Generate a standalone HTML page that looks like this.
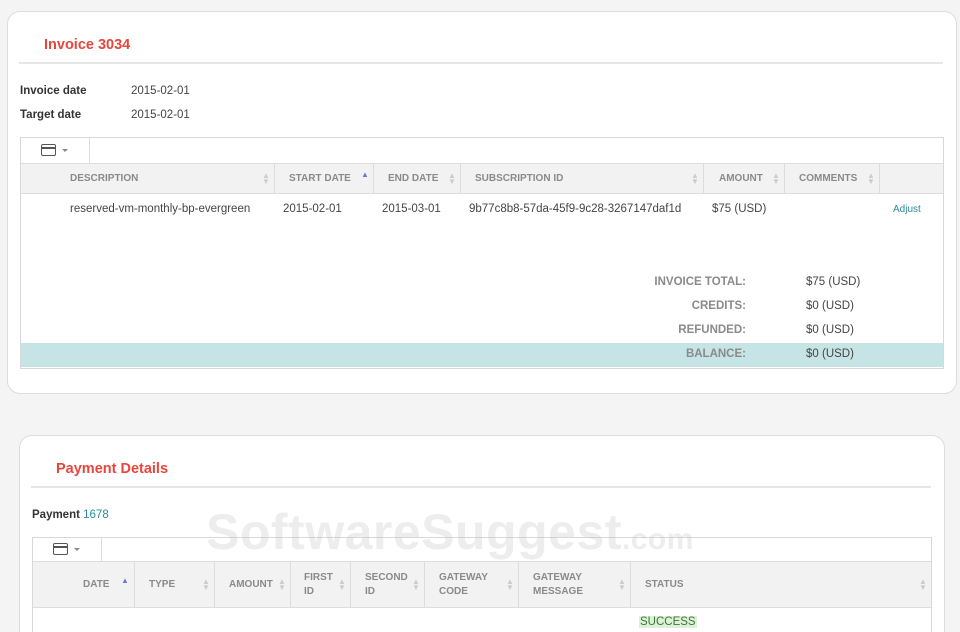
<!DOCTYPE html>
<html><head><style>
*{box-sizing:border-box;margin:0;padding:0}
html{width:960px;height:632px;overflow:hidden}
body{width:960px;height:632px;overflow:hidden;background:#f4f4f4;font-family:"Liberation Sans",Arial,sans-serif;font-size:11.5px;color:#444;position:relative}
.card{position:absolute;background:#fff;border:1px solid #ddd;border-radius:13px}
.t{position:absolute;white-space:nowrap}
.title{color:#e8453c;font-weight:bold;font-size:14.5px}
.hr{position:absolute;height:2px;background:#e6e6e6}
.box{position:absolute;border:1px solid #d8d8d8;background:#fff}
.hdr{position:absolute;left:0;right:0;background:#f2f2f2;border-top:1px solid #ddd;border-bottom:1px solid #ddd}
.h{position:absolute;color:#8a8a8a;font-weight:bold;font-size:10px;white-space:nowrap}
.vl{position:absolute;top:0;bottom:0;width:1px;background:#dcdcdc}
.s{position:absolute;color:#ccc;font-size:8px;line-height:6px}
.b{font-weight:bold;color:#333}
</style></head><body>

<div class="card" style="left:7px;top:11px;width:950px;height:383px"></div>
<div class="t title" style="left:44px;top:37px">Invoice 3034</div>
<div class="hr" style="left:19px;top:62px;width:924px"></div>
<div class="t b" style="left:20px;top:85px">Invoice date</div>
<div class="t" style="left:131px;top:85px">2015-02-01</div>
<div class="t b" style="left:20px;top:109px">Target date</div>
<div class="t" style="left:131px;top:109px">2015-02-01</div>

<div class="box" style="left:20px;top:137px;width:924px;height:232px">
  <div class="vl" style="left:68px;height:26px"></div>
  <svg class="t" style="left:20px;top:6px" width="34" height="12"><rect x="0.5" y="0.5" width="14" height="11" rx="1.5" fill="none" stroke="#555"/><rect x="0.5" y="3" width="14" height="2" fill="#555"/><path d="M21 5l3 3 3-3z" fill="#888"/></svg>
  <div class="hdr" style="top:25px;height:31px">
    <div class="vl" style="left:253px"></div><div class="vl" style="left:352px"></div><div class="vl" style="left:439px"></div><div class="vl" style="left:682px"></div><div class="vl" style="left:763px"></div><div class="vl" style="left:858px"></div>
    <div class="h" style="left:49px;top:9px">DESCRIPTION</div><div class="s" style="left:241px;top:9px">▲<br>▼</div>
    <div class="h" style="left:268px;top:9px">START DATE</div><div class="t" style="left:340px;top:6px;color:#6a7ad8;font-size:8px">▲</div>
    <div class="h" style="left:367px;top:9px">END DATE</div><div class="s" style="left:427px;top:9px">▲<br>▼</div>
    <div class="h" style="left:454px;top:9px">SUBSCRIPTION ID</div><div class="s" style="left:670px;top:9px">▲<br>▼</div>
    <div class="h" style="left:698px;top:9px">AMOUNT</div><div class="s" style="left:751px;top:9px">▲<br>▼</div>
    <div class="h" style="left:778px;top:9px">COMMENTS</div><div class="s" style="left:846px;top:9px">▲<br>▼</div>
  </div>
  <div class="t" style="left:49px;top:65px">reserved-vm-monthly-bp-evergreen</div>
  <div class="t" style="left:262px;top:65px">2015-02-01</div>
  <div class="t" style="left:361px;top:65px">2015-03-01</div>
  <div class="t" style="left:448px;top:65px">9b77c8b8-57da-45f9-9c28-3267147daf1d</div>
  <div class="t" style="left:691px;top:65px">$75 (USD)</div>
  <div class="t" style="left:872px;top:66px;color:#2a8a9a;font-size:10px">Adjust</div>
  <div class="t" style="left:0;top:205px;width:922px;height:24px;background:#c6e4e6"></div>
  <div class="h" style="right:197px;top:138px;font-size:11.5px">INVOICE TOTAL:</div><div class="t" style="left:785px;top:138px">$75 (USD)</div>
  <div class="h" style="right:197px;top:162px;font-size:11.5px">CREDITS:</div><div class="t" style="left:785px;top:162px">$0 (USD)</div>
  <div class="h" style="right:197px;top:186px;font-size:11.5px">REFUNDED:</div><div class="t" style="left:785px;top:186px">$0 (USD)</div>
  <div class="h" style="right:197px;top:210px;font-size:11.5px">BALANCE:</div><div class="t" style="left:785px;top:210px">$0 (USD)</div>
</div>

<div class="card" style="left:19px;top:435px;width:926px;height:240px"></div>
<div class="t title" style="left:56px;top:461px">Payment Details</div>
<div class="hr" style="left:31px;top:486px;width:900px"></div>
<div class="t b" style="left:32px;top:509px">Payment <span style="color:#2a8a9a;font-weight:normal">1678</span></div>

<div class="box" style="left:32px;top:537px;width:900px;height:120px">
  <div class="vl" style="left:68px;height:24px"></div>
  <svg class="t" style="left:20px;top:5px" width="34" height="12"><rect x="0.5" y="0.5" width="14" height="11" rx="1.5" fill="none" stroke="#555"/><rect x="0.5" y="3" width="14" height="2" fill="#555"/><path d="M21 5l3 3 3-3z" fill="#888"/></svg>
  <div class="hdr" style="top:23px;height:47px">
    <div class="vl" style="left:101px"></div><div class="vl" style="left:181px"></div><div class="vl" style="left:257px"></div><div class="vl" style="left:317px"></div><div class="vl" style="left:391px"></div><div class="vl" style="left:485px"></div><div class="vl" style="left:597px"></div>
    <div class="h" style="left:50px;top:17px">DATE</div><div class="t" style="left:88px;top:14px;color:#6a7ad8;font-size:8px">▲</div>
    <div class="h" style="left:116px;top:17px">TYPE</div><div class="s" style="left:169px;top:17px">▲<br>▼</div>
    <div class="h" style="left:196px;top:17px">AMOUNT</div><div class="s" style="left:245px;top:17px">▲<br>▼</div>
    <div class="h" style="left:271px;top:9px;line-height:14px">FIRST<br>ID</div><div class="s" style="left:305px;top:17px">▲<br>▼</div>
    <div class="h" style="left:332px;top:9px;line-height:14px">SECOND<br>ID</div><div class="s" style="left:379px;top:17px">▲<br>▼</div>
    <div class="h" style="left:406px;top:9px;line-height:14px">GATEWAY<br>CODE</div><div class="s" style="left:473px;top:17px">▲<br>▼</div>
    <div class="h" style="left:500px;top:9px;line-height:14px">GATEWAY<br>MESSAGE</div><div class="s" style="left:585px;top:17px">▲<br>▼</div>
    <div class="h" style="left:612px;top:17px">STATUS</div><div class="s" style="left:886px;top:17px">▲<br>▼</div>
  </div>
  <div class="t" style="left:606px;top:78px;background:#dff0d8;color:#3c763d;padding:0 1px">SUCCESS</div>
</div>
<div class="t" style="left:206px;top:503px;font-size:50px;font-weight:bold;color:rgba(190,190,190,0.28);letter-spacing:0.5px">SoftwareSuggest<span style="font-size:30px">.com</span></div>
</body></html>
